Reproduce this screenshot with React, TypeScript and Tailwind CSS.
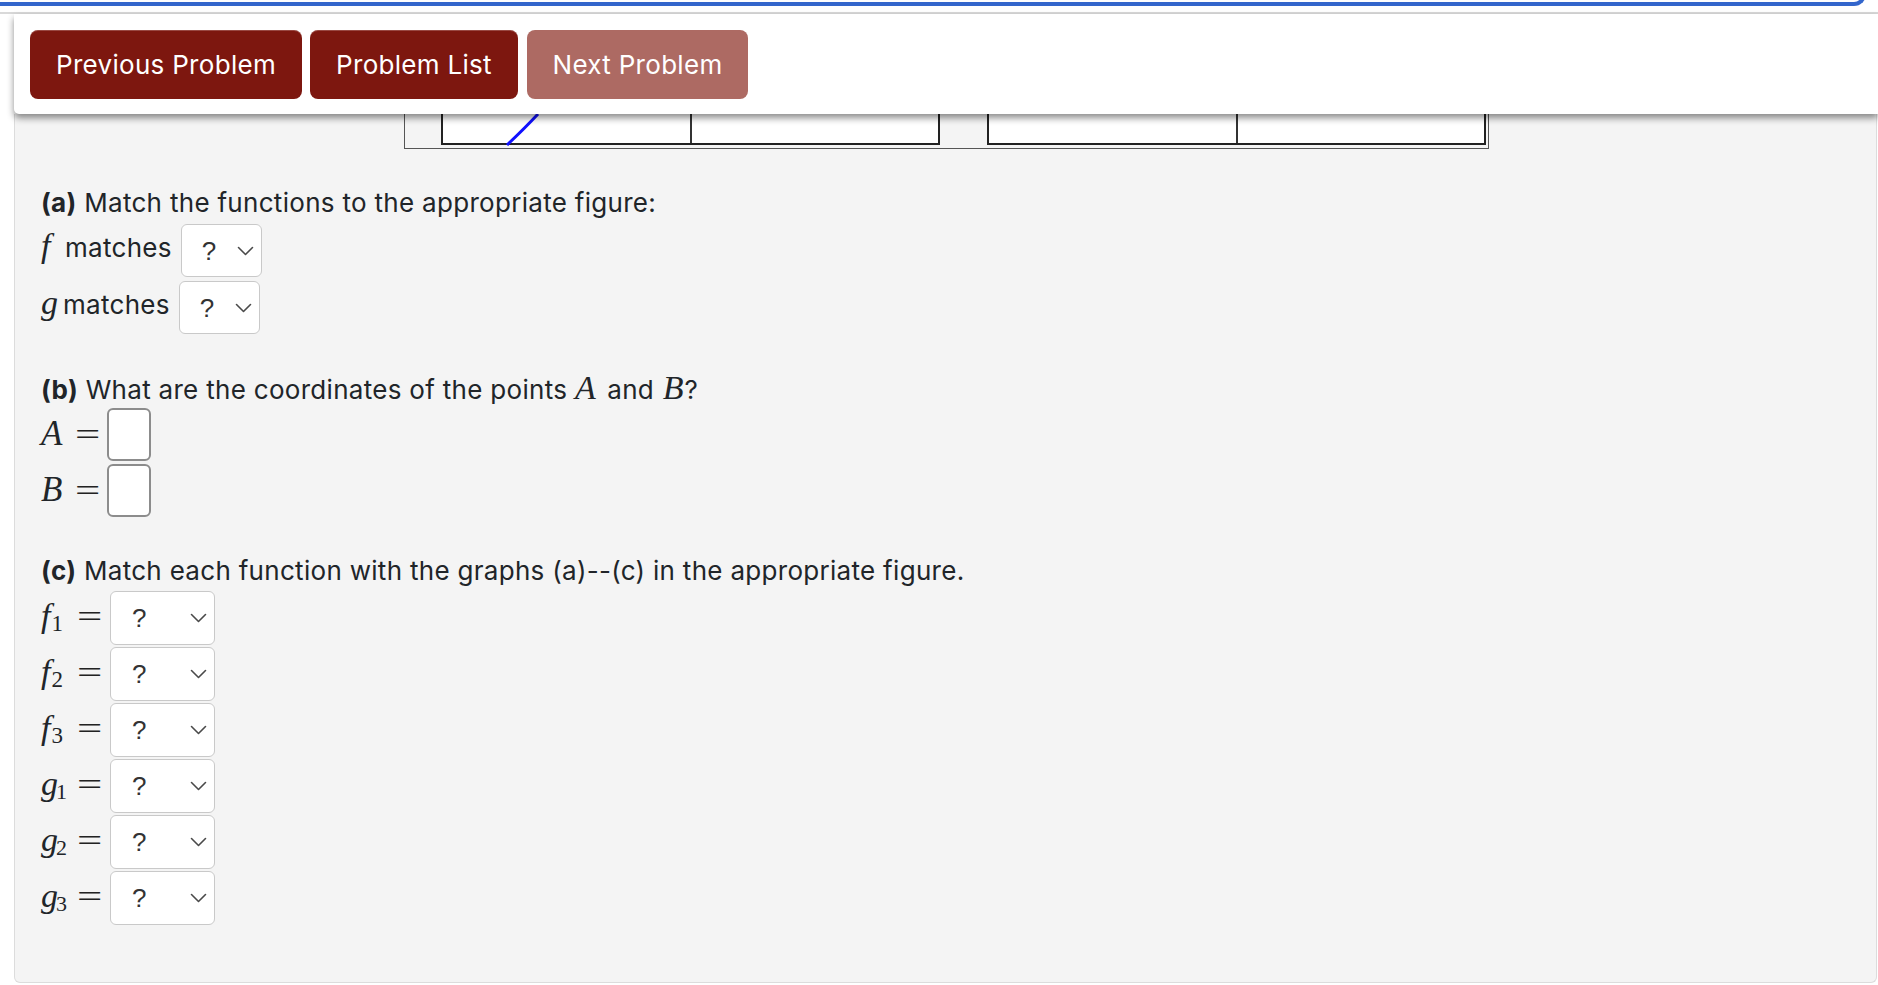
import React from "react";

function Chevron() {
  return (
    <svg width="17" height="10" viewBox="0 0 17 10" fill="none">
      <path d="M1.5 1.5 L8.5 8.5 L15.5 1.5" stroke="#4a4a4a" strokeWidth="1.6" strokeLinecap="round" strokeLinejoin="round" />
    </svg>
  );
}

function SelectSmall() {
  return (
    <div className="w-[81px] h-[53px] shrink-0 bg-white border-[1.5px] border-[#c9c9c9] rounded-[6px] flex items-center justify-between pl-[20px] pr-[7px]">
      <span className="font-['Liberation_Sans',sans-serif] text-[26px] leading-none text-[#333]">?</span>
      <Chevron />
    </div>
  );
}

function SelectWide() {
  return (
    <div className="w-[105px] h-[54px] shrink-0 bg-white border-[1.5px] border-[#c9c9c9] rounded-[6px] flex items-center justify-between pl-[21px] pr-[7px]">
      <span className="font-['Liberation_Sans',sans-serif] text-[26px] leading-none text-[#333]">?</span>
      <Chevron />
    </div>
  );
}

function Blank() {
  return <div className="w-[44px] h-[53px] shrink-0 bg-white border-2 border-[#8c8c8c] rounded-[6px]" />;
}

function Eq() {
  return (
    <span className="inline-block origin-left scale-x-[1.4] font-['Liberation_Serif',serif] text-[32px] leading-none text-[#222] tracking-normal">
      =
    </span>
  );
}

function FigTable({ curve }: { curve?: boolean }) {
  return (
    <div className="w-[499px] h-[31px] bg-white border-x-2 border-b-2 border-[#222] flex">
      <div className="relative w-[249px] h-full border-r-2 border-[#333]">
        {curve && (
          <svg className="absolute left-0 top-0 overflow-visible" width="249" height="29" viewBox="0 0 249 29">
            <path d="M95 0 Q82 14 64 31" stroke="#1010ff" strokeWidth="3" fill="none" />
          </svg>
        )}
      </div>
      <div className="flex-1 h-full" />
    </div>
  );
}

function FuncRow({ v, sub }: { v: string; sub: string }) {
  return (
    <div className="flex items-center h-[54px] mt-[2px]">
      <div className="w-[69px] shrink-0 flex items-baseline mb-[4px]">
        <span className="w-[36px] shrink-0 flex items-baseline tracking-normal">
          <span className="font-['Liberation_Serif',serif] italic text-[34px] leading-none">{v}</span>
          <span
            className={
              v === "g"
                ? "font-['Liberation_Serif',serif] text-[22px] leading-none inline-block translate-y-[4px] -ml-[2px]"
                : "font-['Liberation_Serif',serif] text-[23px] leading-none inline-block translate-y-[4px] ml-[1px]"
            }
          >
            {sub}
          </span>
        </span>
        <Eq />
      </div>
      <SelectWide />
    </div>
  );
}

export default function App() {
  return (
    <div className="w-[1878px] h-[985px] bg-white overflow-hidden flex flex-col font-['Inter',sans-serif] tracking-[0.3px] text-[#212529]">
      <div className="w-[1866px] h-[20px] -mt-[14px] shrink-0 border-b-[4px] border-r-[4px] border-[#3366cc] rounded-br-[12px]" />
      <div className="mt-[6px] h-[2px] shrink-0 bg-[#d9d9d9]" />
      <div className="ml-[14px] flex flex-col">
        <div className="relative z-10 h-[100px] bg-white rounded-bl-[5px] shadow-[0_4px_7px_rgba(0,0,0,0.45)] flex items-start pt-[16px] pl-[16px]">
          <div className="w-[272px] h-[69px] rounded-[8px] bg-[#7d170f] shadow-[inset_0_1px_0_rgba(255,255,255,0.22)] text-white text-[26px] flex items-center justify-center">
            Previous Problem
          </div>
          <div className="ml-[8px] w-[208px] h-[69px] rounded-[8px] bg-[#7d170f] shadow-[inset_0_1px_0_rgba(255,255,255,0.22)] text-white text-[26px] flex items-center justify-center">
            Problem List
          </div>
          <div className="ml-[9px] w-[221px] h-[69px] rounded-[8px] bg-[#ad6a63] text-white text-[26px] flex items-center justify-center">
            Next Problem
          </div>
        </div>

        <div className="mr-[1px] h-[869px] bg-[#f4f4f4] border-x border-b border-[#dcdcdc] rounded-b-[6px] flex flex-col">
          <div className="ml-[389px] w-[1085px] h-[35px] shrink-0 border-x border-b border-[#555] flex pl-[36px]">
            <FigTable curve />
            <div className="ml-[47px]">
              <FigTable />
            </div>
          </div>

          <div className="pl-[26px] flex flex-col">
            <div className="mt-[34px] h-[39px] leading-[39px] text-[26px]">
              <span className="font-bold">(a)</span> Match the functions to the appropriate figure:
            </div>

            <div className="mt-[2px] flex items-center h-[53px]">
              <div className="flex items-baseline mb-[6px] text-[26px] leading-[39px]">
                <span className="w-[24px] font-['Liberation_Serif',serif] italic text-[34px] leading-none">f</span>
                <span>matches</span>
              </div>
              <div className="ml-[9px]">
                <SelectSmall />
              </div>
            </div>
            <div className="mt-[4px] flex items-center h-[53px]">
              <div className="flex items-baseline mb-[6px] text-[26px] leading-[39px]">
                <span className="w-[22px] font-['Liberation_Serif',serif] italic text-[34px] leading-none">g</span>
                <span>matches</span>
              </div>
              <div className="ml-[9px]">
                <SelectSmall />
              </div>
            </div>

            <div className="mt-[34px] h-[39px] leading-[39px] text-[26px]">
              <span className="font-bold">(b)</span> What are the coordinates of the points{" "}
              <span className="font-['Liberation_Serif',serif] italic text-[34px] tracking-normal mr-[4px]">A</span> and{" "}
              <span className="font-['Liberation_Serif',serif] italic text-[34px] tracking-normal ml-[1px] mr-[1px]">B</span>?
            </div>

            <div className="mt-[1px] flex items-center h-[53px]">
              <div className="w-[66px] shrink-0 flex items-baseline mb-[2px]">
                <span className="w-[34px] shrink-0 font-['Liberation_Serif',serif] italic text-[35px] leading-none tracking-normal">A</span>
                <Eq />
              </div>
              <Blank />
            </div>
            <div className="mt-[3px] flex items-center h-[53px]">
              <div className="w-[66px] shrink-0 flex items-baseline mb-[2px]">
                <span className="w-[34px] shrink-0 font-['Liberation_Serif',serif] italic text-[35px] leading-none tracking-normal">B</span>
                <Eq />
              </div>
              <Blank />
            </div>

            <div className="mt-[34px] h-[39px] leading-[39px] text-[26px]">
              <span className="font-bold">(c)</span> Match each function with the graphs (a)--(c) in the appropriate figure.
            </div>

            <div className="mt-[-1px] flex flex-col">
              <FuncRow v="f" sub="1" />
              <FuncRow v="f" sub="2" />
              <FuncRow v="f" sub="3" />
              <FuncRow v="g" sub="1" />
              <FuncRow v="g" sub="2" />
              <FuncRow v="g" sub="3" />
            </div>
          </div>
        </div>
      </div>
    </div>
  );
}
